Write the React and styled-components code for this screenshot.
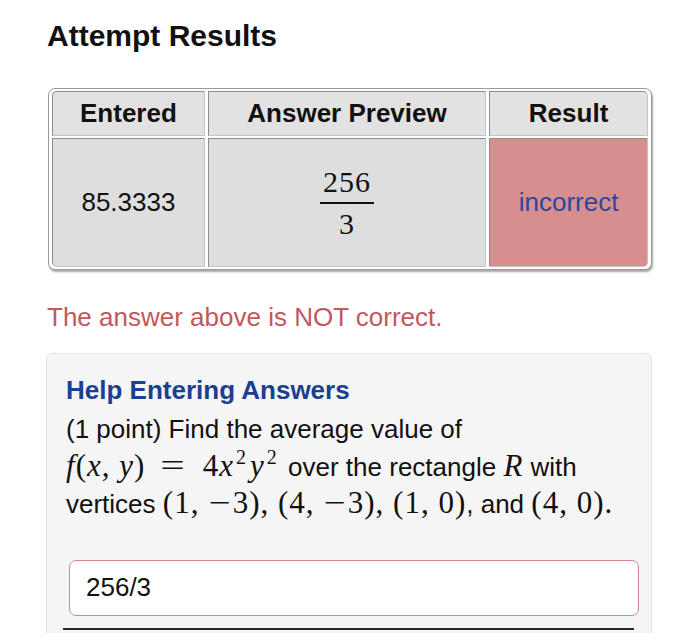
import React from 'react'
import styled, { createGlobalStyle } from 'styled-components'

const Global = createGlobalStyle`
  html, body { margin: 0; padding: 0; background: #fff; }
  body { font-family: "Liberation Sans", Arial, sans-serif; color: #111; }
`

const Page = styled.div`
  width: 606px;
  margin-left: 46px;
  padding-top: 19px;
`

const Title = styled.h2`
  margin: 0 0 0 1px;
  font-size: 30px;
  line-height: 34px;
  font-weight: 700;
  color: #111;
`

const TableFrame = styled.div`
  margin: 35px 0 0 2px;
  width: 604px;
  box-sizing: border-box;
  border: 1px solid #9a9a9a;
  border-radius: 7px;
  box-shadow: 1px 2px 2px rgba(0, 0, 0, 0.35);
  background: #fff;
  overflow: hidden;
`

const Table = styled.table`
  width: 100%;
  border-collapse: separate;
  border-spacing: 3px 2px;
`

const Head = styled.th`
  height: 43px;
  padding: 0;
  background: #e2e2e2;
  border: 1px solid;
  border-color: #8c8c8c #c4c4c4 #c4c4c4 #8c8c8c;
  font-size: 26px;
  font-weight: 700;
  text-align: center;
  width: ${p => p.$w}px;
  &:first-child { border-top-left-radius: 5px; }
  &:last-child { border-top-right-radius: 5px; }
`

const Cell = styled.td`
  height: 127px;
  padding: 0;
  border: 1px solid;
  border-color: #8c8c8c #c4c4c4 #c4c4c4 #8c8c8c;
  background: ${p => (p.$bad ? '#d68e8f' : '#dedede')};
  color: ${p => (p.$bad ? '#2b47a0' : '#111')};
  font-size: 26px;
  text-align: center;
  vertical-align: middle;
  &:first-child { border-bottom-left-radius: 5px; }
  &:last-child { border-bottom-right-radius: 5px; }
`

const Frac = styled.span`
  display: inline-flex;
  flex-direction: column;
  align-items: center;
  font-family: "Liberation Serif", "Times New Roman", serif;
  font-size: 30px;
  line-height: 34px;
  letter-spacing: 1px;
  color: #111;
`

const FracBar = styled.span`
  display: block;
  width: 54px;
  height: 2px;
  background: #111;
  margin: 3px 0 3px;
`

const Verdict = styled.p`
  margin: 32px 0 0 1px;
  font-size: 26px;
  line-height: 30px;
  color: #c2585c;
`

const HelpBox = styled.div`
  margin-top: 21px;
  box-sizing: border-box;
  width: 606px;
  height: 290px;
  padding: 18px 19px 0 19px;
  background: #f5f5f5;
  border: 1px solid #e2e2e2;
  border-radius: 6px;
`

const HelpTitle = styled.div`
  font-size: 26px;
  font-weight: 700;
  line-height: 37px;
  color: #1b3f91;
  margin-bottom: 2px;
`

const Problem = styled.p`
  margin: 0;
  font-size: 26px;
  line-height: 37.5px;
  color: #111;
`

const M = styled.span`
  font-family: "Liberation Serif", "Times New Roman", serif;
  font-size: 31px;
  line-height: 1;
  font-style: ${p => (p.$up ? 'normal' : 'italic')};
  letter-spacing: 1px;
`

const Rel = styled(M)`
  margin: 0 20px 0 19px;
  display: inline-block;
  transform: scaleX(1.4);
`

const Minus = styled(M)`
  margin: 0 3px 0 3px;
  display: inline-block;
  transform: scaleX(1.25);
`

const Sup = styled.sup`
  font-family: "Liberation Serif", "Times New Roman", serif;
  font-size: 20px;
  line-height: 0;
  vertical-align: 12px;
  margin: 0 4px 0 2px;
`

const AnswerInput = styled.div`
  margin: 36px 0 0 3px;
  box-sizing: border-box;
  width: 570px;
  height: 56px;
  padding: 0 16px;
  display: flex;
  align-items: center;
  background: #fff;
  border: 1.5px solid #d4878b;
  border-radius: 7px;
  font-size: 26px;
  color: #111;
`

const Rule = styled.div`
  margin: 12px 0 0 -3px;
  width: 571px;
  height: 2px;
  background: #2a2a2a;
`

const Point = ({ a, neg, b }) => (
  <>
    <M $up>({a}, </M>
    {neg && <Minus $up>−</Minus>}
    <M $up>{b})</M>
  </>
)

export default function App() {
  return (
    <>
      <Global />
      <Page>
        <Title>Attempt Results</Title>
        <TableFrame>
          <Table>
            <thead>
              <tr>
                <Head $w={152}>Entered</Head>
                <Head $w={280}>Answer Preview</Head>
                <Head $w={158}>Result</Head>
              </tr>
            </thead>
            <tbody>
              <tr>
                <Cell>85.3333</Cell>
                <Cell>
                  <Frac>
                    <span>256</span>
                    <FracBar />
                    <span>3</span>
                  </Frac>
                </Cell>
                <Cell $bad>incorrect</Cell>
              </tr>
            </tbody>
          </Table>
        </TableFrame>
        <Verdict>The answer above is NOT correct.</Verdict>
        <HelpBox>
          <HelpTitle>Help Entering Answers</HelpTitle>
          <Problem>
            (1 point) Find the average value of
            <br />
            <M>f</M><M $up>(</M><M>x</M><M $up>, </M><M>y</M><M $up>)</M>
            <Rel $up>=</Rel>
            <M $up>4</M><M>x</M><Sup>2</Sup><M>y</M><Sup>2</Sup> over the rectangle <M>R</M> with
            <br />
            vertices <Point a="1" neg b="3" /><M $up>, </M><Point a="4" neg b="3" /><M $up>, </M><Point a="1" b="0" />, and <Point a="4" b="0" /><M $up>.</M>
          </Problem>
          <AnswerInput>256/3</AnswerInput>
          <Rule />
        </HelpBox>
      </Page>
    </>
  )
}
